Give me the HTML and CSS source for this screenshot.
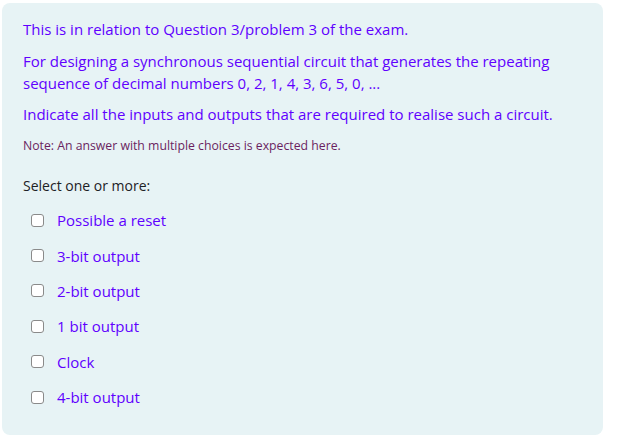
FILE: index.html
```html
<!DOCTYPE html>
<html>
<head>
<meta charset="utf-8">
<link rel="stylesheet" href="styles.css">
</head>
<body>
<div class="que">
  <p class="q">This is in relation to Question 3/problem 3 of the exam.</p>
  <p class="q">For designing a synchronous sequential circuit that generates the repeating sequence of decimal numbers 0, 2, 1, 4, 3, 6, 5, 0, ...</p>
  <p class="q">Indicate all the inputs and outputs that are required to realise such a circuit.</p>
  <p class="note">Note: An answer with multiple choices is expected here.</p>
  <p class="prompt">Select one or more:</p>
  <div class="answers">
    <label class="opt"><span class="box"></span><span class="lbl">Possible a reset</span></label>
    <label class="opt"><span class="box"></span><span class="lbl">3-bit output</span></label>
    <label class="opt"><span class="box"></span><span class="lbl">2-bit output</span></label>
    <label class="opt"><span class="box"></span><span class="lbl">1 bit output</span></label>
    <label class="opt"><span class="box"></span><span class="lbl">Clock</span></label>
    <label class="opt"><span class="box"></span><span class="lbl">4-bit output</span></label>
  </div>
</div>
</body>
</html>
```
FILE: styles.css
```css
html, body {
  margin: 0;
  padding: 0;
  background: #ffffff;
}
body {
  font-family: "Open Sans", "Noto Sans", sans-serif;
  font-size: 15px;
}
.que {
  margin: 3px 0 0 2px;
  width: 601px;
  height: 432px;
  box-sizing: border-box;
  background: #e7f3f5;
  border-radius: 8px;
  padding: 15px 20px 0 21px;
}
.q {
  margin: 0 0 9.5px;
  line-height: 22px;
  color: #6000ff;
}
.note {
  margin: 11.5px 0 0;
  font-size: 12.25px;
  line-height: 17px;
  color: #6a1f5f;
}
.prompt {
  margin: 21px 0 0;
  font-size: 14px;
  line-height: 22px;
  color: #1d2125;
}
.answers {
  display: flex;
  flex-direction: column;
  margin-top: 6px;
}
.opt {
  display: flex;
  align-items: center;
  height: 35.4px;
  padding-left: 8px;
  color: #6000ff;
}
.box {
  width: 11px;
  height: 11px;
  border: 1px solid #8a8a8a;
  border-radius: 3px;
  background: #fff;
  margin-right: 13px;
}
.lbl {
  line-height: 22px;
}
```
